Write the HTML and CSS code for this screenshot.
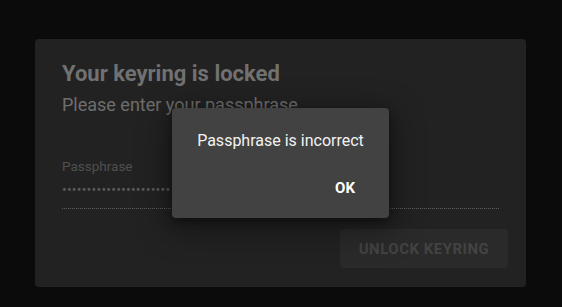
FILE: index.html
```html
<!DOCTYPE html>
<html>
<head>
<meta charset="utf-8">
<link rel="stylesheet" href="styles.css">
</head>
<body>
<div class="page">
  <div class="card">
    <h1 class="title">Your keyring is locked</h1>
    <p class="subtitle">Please enter your passphrase</p>
    <div class="field">
      <label class="label">Passphrase</label>
      <div class="input">••••••••••••••••••••••</div>
    </div>
    <div class="actions">
      <button class="unlock">UNLOCK KEYRING</button>
    </div>
  </div>
  <div class="dialog">
    <p class="message">Passphrase is incorrect</p>
    <div class="dialog-actions">
      <button class="ok">OK</button>
    </div>
  </div>
</div>
</body>
</html>
```

FILE: styles.css
```css
html, body {
  margin: 0;
  padding: 0;
  background: #0b0b0b;
  width: 562px;
  height: 307px;
  overflow: hidden;
  font-family: Roboto, "Liberation Sans", sans-serif;
}
.page {
  position: relative;
  padding: 39px 36px 0 35px;
}
.card {
  width: 491px;
  height: 248px;
  box-sizing: border-box;
  background: #222222;
  border-radius: 4px;
  padding: 21px 27px 0 27px;
  display: flex;
  flex-direction: column;
}
.title {
  margin: 0;
  font-size: 22px;
  font-weight: 700;
  color: #717171;
  line-height: 28px;
}
.subtitle {
  margin: 6px 0 0 0;
  font-size: 18px;
  color: #6e6e6e;
  line-height: 22px;
}
.field {
  margin-top: 42px;
  display: flex;
  flex-direction: column;
}
.label {
  font-size: 13.5px;
  color: #4f4f4f;
  line-height: 16px;
}
.input {
  margin-top: 8px;
  font-size: 14px;
  letter-spacing: 0.2px;
  color: #5a5a5a;
  line-height: 16px;
  padding-bottom: 10px;
  border-bottom: 1px dotted #5e5e5e;
}
.actions {
  display: flex;
  justify-content: flex-end;
  margin-top: 20px;
  margin-right: -9px;
}
.unlock {
  width: 168px;
  height: 39px;
  border: none;
  border-radius: 4px;
  background: #2a2a2a;
  color: #434343;
  font-family: Roboto, "Liberation Sans", sans-serif;
  font-size: 15px;
  font-weight: 700;
  letter-spacing: 0.5px;
}
.dialog {
  position: absolute;
  left: 172px;
  top: 108px;
  width: 217px;
  height: 110px;
  box-sizing: border-box;
  background: #424242;
  border-radius: 4px;
  box-shadow: 0 8px 30px 6px rgba(0,0,0,0.35), 0 3px 8px rgba(0,0,0,0.4);
  display: flex;
  flex-direction: column;
}
.message {
  margin: 24px 0 0 0;
  text-align: center;
  font-size: 16px;
  color: #f2f2f2;
  line-height: 18px;
}
.dialog-actions {
  display: flex;
  justify-content: flex-end;
  margin-top: 29px;
  padding-right: 34px;
}
.ok {
  border: none;
  background: transparent;
  color: #ffffff;
  font-family: Roboto, "Liberation Sans", sans-serif;
  font-size: 15px;
  font-weight: 700;
  padding: 0;
  line-height: 18px;
}
```
